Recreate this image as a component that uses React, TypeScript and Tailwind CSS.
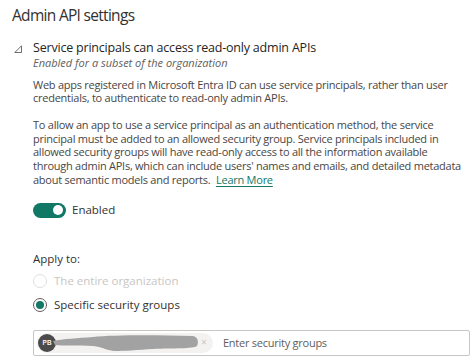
import React from "react";

const font = { fontFamily: '"Segoe UI", "Open Sans", sans-serif' };

export default function App() {
  return (
    <div
      className="w-[474px] h-[360px] bg-white overflow-hidden flex flex-col text-[#323130]"
      style={font}
    >
      <div className="pl-[12px] pt-[5px] text-[15.5px] leading-[20px] tracking-[-0.7px] text-[#323130]">
        Admin API settings
      </div>

      <div className="mt-[16px] flex">
        <div className="w-[33px] flex justify-start pl-[14px] pt-[4px]">
          <svg width="8" height="8" viewBox="0 0 8 8">
            <path d="M7.5 0.8 V7.5 H0.8 Z" fill="none" stroke="#605e5c" strokeWidth="0.9" strokeLinejoin="round" />
          </svg>
        </div>
        <div className="flex flex-col gap-[1px]">
          <div className="text-[12.5px] leading-[14px] tracking-[-0.2px] text-[#252423]">
            Service principals can access read-only admin APIs
          </div>
          <div className="text-[11px] leading-[14px] italic text-[#605e5c]">
            Enabled for a subset of the organization
          </div>
        </div>
      </div>

      <div className="pl-[33px] pr-[4px] flex flex-col text-[11px] leading-[13.6px] tracking-[-0.25px] text-[#484644]">
        <p className="mt-[7.5px] whitespace-nowrap">
          Web apps registered in Microsoft Entra ID can use service principals, rather than user
          <br />
          credentials, to authenticate to read-only admin APIs.
        </p>
        <p className="mt-[13.5px] whitespace-nowrap">
          To allow an app to use a service principal as an authentication method, the service
          <br />
          principal must be added to an allowed security group. Service principals included in
          <br />
          allowed security groups will have read-only access to all the information available
          <br />
          through admin APIs, which can include users' names and emails, and detailed metadata
          <br />
          about semantic models and reports.{" "}
          <span className="ml-[3px] text-[#117865] underline underline-offset-2">Learn More</span>
        </p>

        <div className="mt-[17px] flex items-center h-[14px] tracking-normal">
          <div className="w-[33px] h-[15px] rounded-full bg-[#117865] flex items-center justify-end pr-[3px]">
            <div className="w-[10px] h-[10px] rounded-full bg-white" />
          </div>
          <span className="ml-[6px] text-[11.5px] text-[#323130]">Enabled</span>
        </div>

        <div className="mt-[35px] h-[14px] leading-[14px] text-[11.5px] tracking-normal text-[#323130]">Apply to:</div>

        <div className="mt-[8px] flex items-center h-[14px] tracking-normal">
          <div className="w-[14px] h-[14px] rounded-full border border-[#e1dfdd]" />
          <span className="ml-[7px] text-[11.5px] text-[#c8c6c4]">The entire organization</span>
        </div>

        <div className="mt-[10px] flex items-center h-[14px] tracking-normal">
          <div className="w-[14px] h-[14px] rounded-full border border-[#605e5c] flex items-center justify-center">
            <div className="w-[8px] h-[8px] rounded-full bg-[#117865]" />
          </div>
          <span className="ml-[7px] text-[11.5px] text-[#323130]">Specific security groups</span>
        </div>

        <div className="mt-[18px] w-[437px] h-[26px] border border-[#c8c6c4] rounded-[2px] flex items-center pl-[3px]">
          <div className="relative flex items-center h-[20px] w-[176px] rounded-full bg-[#f3f2f1]">
            <div className="w-[18px] h-[18px] ml-[1px] rounded-full bg-[#4b4b4b] flex items-center justify-center text-[7.5px] font-semibold text-white leading-none tracking-normal">
              PB
            </div>
            <svg className="absolute left-[16px] top-[1px]" width="146" height="18" viewBox="0 0 146 18">
              <path
                d="M0 7 C10 5 25 4 40 3 C60 1 100 1 140 2 C145 3 146 8 144 12 C140 15 120 14 100 15 C85 16 70 17 62 17 C55 17 50 13 40 12 C25 11 10 12 2 11 Z"
                fill="#a2a2a2"
              />
            </svg>
            <span className="absolute left-[164px] top-[2px] text-[10px] leading-[14px] text-[#c8c6c4]">×</span>
          </div>
          <span className="ml-[10px] text-[11px] text-[#605e5c]">Enter security groups</span>
        </div>
      </div>
    </div>
  );
}
